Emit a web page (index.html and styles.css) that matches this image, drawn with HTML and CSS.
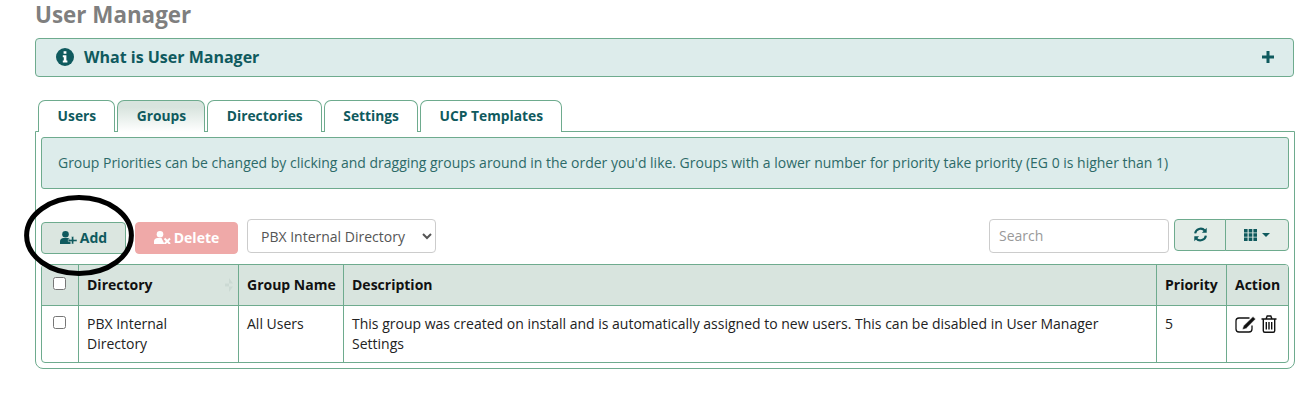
FILE: index.html
```html
<!DOCTYPE html>
<html lang="en">
<head>
<meta charset="utf-8">
<title>User Manager</title>
<link rel="stylesheet" href="styles.css">
</head>
<body>
<main class="page">
  <h1 class="title">User Manager</h1>
  <div class="info-panel">
    <span class="info-left">
      <svg class="info-icon" viewBox="0 0 18 18"><circle cx="9" cy="9" r="9" fill="#0f5a5e"/><path d="M7.6 3.2h2.8v2.6H7.6zM6.8 7.2h3.6v5.4h1v2H6.800v-2h1V9.200h-1z" fill="#fff"/></svg>
      What is User Manager
    </span>
    <svg class="plus-icon" viewBox="0 0 12 12"><path d="M4.500 0h3v4.500H12v3H7.500V12h-3V7.500H0v-3h4.500z" fill="#0f5a5e"/></svg>
  </div>
  <nav class="tabs">
    <a class="tab tab-users">Users</a>
    <a class="tab tab-active">Groups</a>
    <a class="tab">Directories</a>
    <a class="tab">Settings</a>
    <a class="tab">UCP Templates</a>
  </nav>
  <section class="tab-body">
    <div class="alert">Group Priorities can be changed by clicking and dragging groups around in the order you'd like. Groups with a lower number for priority take priority (EG 0 is higher than 1)</div>
    <div class="toolbar">
      <div class="toolbar-left">
        <button class="btn btn-add">
          <svg class="btn-icon" viewBox="0 0 17 13"><circle cx="5.500" cy="3.300" r="3.300" fill="currentColor"/><path d="M0 13v-2.500C0 8.500 1.500 7 3.500 7h4C9 7 10 8 10.500 9.500V13z" fill="currentColor"/><path d="M11.500 5.500h2.200v2.900H17v2.200h-3.300V13h-2.200v-2.400H8.300V8.400h3.200z" fill="currentColor" stroke="#dbe6e0" stroke-width=".5"/></svg>
          Add
        </button>
        <button class="btn btn-delete">
          <svg class="btn-icon" viewBox="0 0 17 13"><circle cx="6" cy="3.300" r="3.300" fill="currentColor"/><path d="M0 13v-2.500C0 8.500 1.500 7 3.500 7h4l3 6z" fill="currentColor"/><path d="M10.500 7.500l5.500 5.500M16 7.500L10.500 13" stroke="currentColor" stroke-width="2"/></svg>
          Delete
        </button>
        <select class="dir-select"><option>PBX Internal Directory</option></select>
      </div>
      <div class="toolbar-right">
        <input class="search" type="text" placeholder="Search">
        <div class="btn-group">
          <button class="tool-btn tool-refresh">
            <svg class="tool-icon" viewBox="0 0 14 14"><path d="M2 6A5.200 5.200 0 0 1 11 3.300M12 8A5.200 5.200 0 0 1 3 10.700" fill="none" stroke="#0f5a5e" stroke-width="2"/><path d="M12.800.8v4.500H8.300zM1.200 13.200V8.700h4.500z" fill="#0f5a5e"/></svg>
          </button>
          <button class="tool-btn tool-columns">
            <svg class="grid-icon" viewBox="0 0 13 12"><path d="M0 0h3.600v3.400H0zM4.700 0h3.600v3.400H4.700zM9.400 0H13v3.400H9.400zM0 4.300h3.600v3.400H0zM4.700 4.300h3.600v3.400H4.700zM9.400 4.300H13v3.400H9.400zM0 8.600h3.600V12H0zM4.700 8.600h3.600V12H4.700zM9.400 8.600H13V12H9.400z" fill="#0f5a5e"/></svg>
            <span class="caret"></span>
          </button>
        </div>
      </div>
    </div>
    <div class="table-wrap">
      <table class="groups">
        <thead>
          <tr>
            <th class="col-check"><input type="checkbox" class="check"></th>
            <th class="col-dir">Directory<span class="sort"></span></th>
            <th class="col-name">Group Name</th>
            <th>Description</th>
            <th class="col-pri">Priority</th>
            <th class="col-act">Action</th>
          </tr>
        </thead>
        <tbody>
          <tr>
            <td class="col-check"><input type="checkbox" class="check"></td>
            <td>PBX Internal Directory</td>
            <td>All Users</td>
            <td>This group was created on install and is automatically assigned to new users. This can be disabled in User Manager Settings</td>
            <td>5</td>
            <td class="actions">
              <svg class="act-edit" viewBox="0 0 21 17"><path d="M14.500 2H4a3 3 0 0 0-3 3v8a3 3 0 0 0 3 3h10a3 3 0 0 0 3-3V9.500" fill="none" stroke="#111" stroke-width="1.300"/><path d="M18 .5l2.600 2.600-9.600 9.600-3.600.9.900-3.600z" fill="#111" stroke="#fff" stroke-width=".6"/></svg>
              <svg class="act-trash" viewBox="0 0 16 18"><path d="M.5 4h15M5 4l1.200-3h3.600L11 4M2.300 4v11.800a1.500 1.500 0 0 0 1.500 1.500h8.400a1.500 1.500 0 0 0 1.500-1.500V4M5.300 7v7.500M8 7v7.500M10.700 7v7.500" fill="none" stroke="#111" stroke-width="1.400"/></svg>
            </td>
          </tr>
        </tbody>
      </table>
    </div>
    <svg class="marker" viewBox="0 0 110 81"><ellipse cx="55" cy="40.500" rx="52.400" ry="38" fill="none" stroke="#000" stroke-width="5"/></svg>
  </section>
</main>
</body>
</html>
```
FILE: styles.css
```css
* { box-sizing: border-box; }
html, body { margin: 0; padding: 0; background: #fff; }
body { font-family: "Open Sans", sans-serif; font-size: 14px; color: #1f2a2a; }
.page { padding: 0 5px 0 35px; }
.title { margin: 0; height: 38px; padding-top: 1px; font-size: 22.400px; line-height: 28px; font-weight: 700; color: #7f7f7f; }
.info-panel { height: 39px; display: flex; align-items: center; justify-content: space-between; padding: 0 19px 2px 20px; background: #ddeceb; border: 1px solid #6eab8e; border-radius: 4px; }
.info-left { display: flex; align-items: center; gap: 10px; font-size: 16px; font-weight: 700; color: #0f5a5e; }
.info-icon { width: 18px; height: 18px; }
.plus-icon { width: 12px; height: 12px; }
.tabs { display: flex; gap: 2.200px; margin-top: 23px; padding-left: 3px; height: 32px; position: relative; z-index: 1; }
.tab { height: 32px; padding: 5px 17.800px 0 18.600px; border: 1px solid #6eab8e; border-bottom: 0; border-radius: 7px 7px 0 0; background: #fff; font-size: 13.800px; line-height: 19px; font-weight: 700; color: #0f5a5e; }
.tab-active { background: linear-gradient(#d8e4de 20%, #fff); }
.tab-body { position: relative; height: 238px; margin: -1px -1px 0 0; padding: 5px 5px 0; border: 1px solid #6eab8e; border-radius: 0 0 8px 8px; }
.alert { height: 52px; padding: 15px 16px 0; background: #ddeceb; border: 1px solid #6eab8e; border-radius: 3px; font-size: 13.970px; line-height: 20px; color: #2c6a68; }
.toolbar { display: flex; justify-content: space-between; align-items: flex-start; margin-top: 30px; height: 45px; }
.toolbar-left, .toolbar-right { display: flex; align-items: flex-start; gap: 5px; }
.toolbar-left { gap: 9px; }
.btn { display: flex; align-items: center; justify-content: center; gap: 3px; height: 32px; margin-top: 3px; padding: 0 0 2px; border-radius: 4px; font-family: inherit; font-size: 14px; font-weight: 700; }
.btn-icon { width: 17px; height: 13px; }
.btn-add { width: 85px; border: 1px solid #6eab8e; background: #dbe6e0; color: #0f5a5e; }
.btn-delete { width: 103px; border: 1px solid #efa9a8; background: #efa9a8; color: #fff; }
.dir-select { width: 189px; height: 34px; padding-left: 9px; margin-top: 0; background: #fff; border: 1px solid #ccc; border-radius: 4px; font-family: inherit; font-size: 14px; color: #555; }
.search { width: 180px; height: 34px; padding: 0 9px 2px; border: 1px solid #ccc; border-radius: 4px; font-family: inherit; font-size: 14px; }
.search::placeholder { color: #999; opacity: 1; }
.btn-group { display: flex; height: 32px; }
.tool-btn { display: flex; align-items: center; justify-content: center; gap: 5px; height: 32px; padding: 0; border: 1px solid #6eab8e; background: #e3ece7; }
.tool-refresh { width: 52px; border-radius: 4px 0 0 4px; padding-bottom: 2px; }
.tool-columns { width: 64px; margin-left: -1px; border-radius: 0 4px 4px 0; padding-bottom: 1px; }
.tool-icon { width: 15px; height: 15px; }
.grid-icon { width: 13px; height: 12px; }
.caret { width: 0; height: 0; border-left: 4px solid transparent; border-right: 4px solid transparent; border-top: 4px solid #0f5a5e; }
.table-wrap { border: 1px solid #6eab8e; border-radius: 4px; overflow: hidden; }
.groups { width: 100%; border-collapse: separate; border-spacing: 0; table-layout: fixed; }
.groups th, .groups td { padding: 8px; border-left: 1px solid #6eab8e; text-align: left; vertical-align: top; line-height: 20px; font-size: 14px; }
.groups th:first-child, .groups td:first-child { border-left: 0; }
.groups th { height: 41px; padding-top: 10px; background: #d8e4de; border-bottom: 1px solid #6eab8e; font-weight: 700; color: #111; white-space: nowrap; }
.groups td { height: 56px; padding-top: 8px; color: #222; }
.col-check { width: 36px; }
.col-dir { width: 160px; position: relative; }
.col-name { width: 105px; }
.col-pri { width: 70px; }
.col-act { width: 62px; }
.groups th.col-check { padding: 12px 0 0 11px; }
.groups td.col-check { padding: 10px 0 0 11px; }
.check { display: block; width: 13px; height: 13px; margin: 0; }
.sort { position: absolute; right: 5px; top: 13px; width: 8px; height: 14px; background: #cbd9d3; clip-path: polygon(50% 0, 100% 40%, 0 40%, 0 60%, 100% 60%, 50% 100%); }
.groups td.actions { padding: 9px 0 0 8px; font-size: 0; white-space: nowrap; }
.act-edit { width: 21px; height: 17px; margin-right: 5px; }
.act-trash { width: 16px; height: 18px; }
.marker { position: absolute; left: -12px; top: 63px; width: 110px; height: 81px; pointer-events: none; }
```
